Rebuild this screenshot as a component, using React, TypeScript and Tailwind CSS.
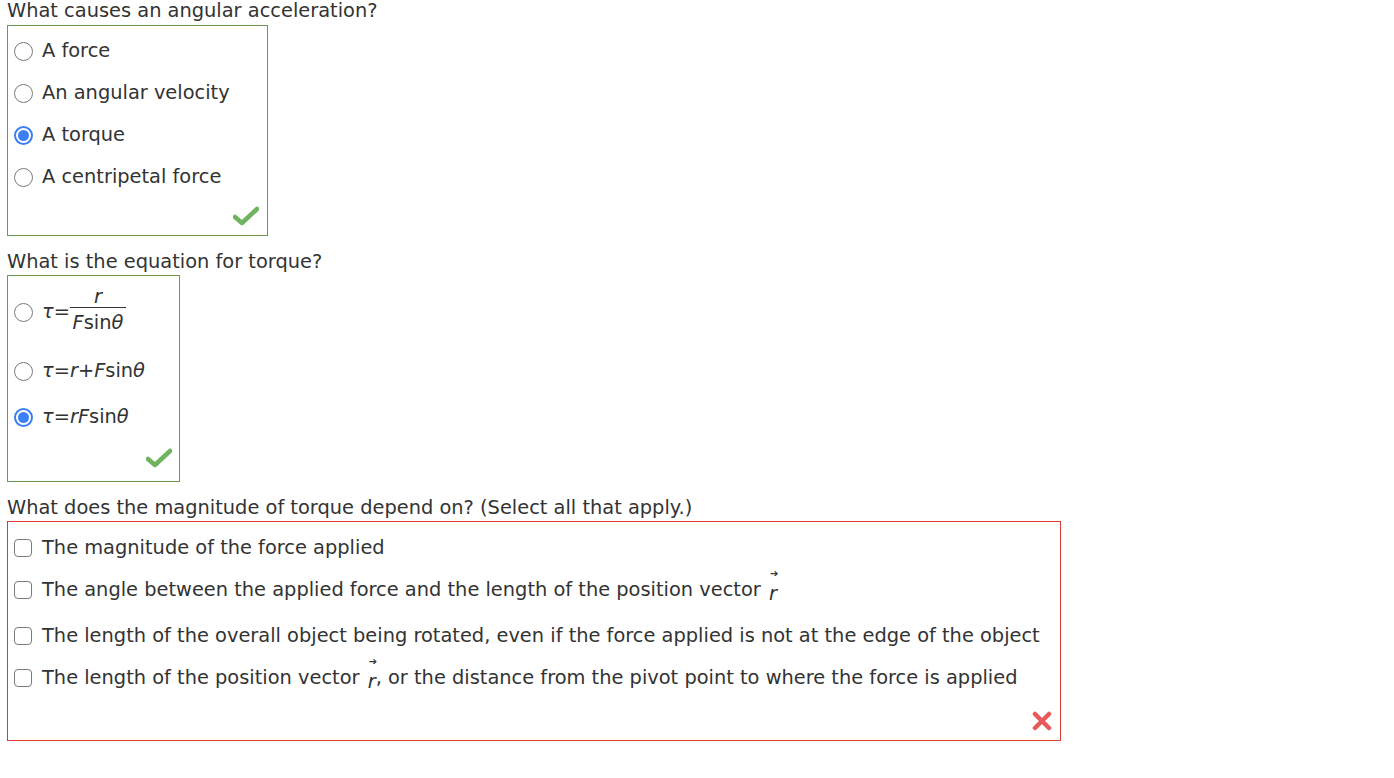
import React from 'react';

const font = { fontFamily: '"DejaVu Sans", Verdana, sans-serif' };

const Radio = ({ checked }: { checked?: boolean }) =>
  checked ? (
    <span className="w-[19px] h-[19px] rounded-full border-2 border-[#3b7ff5] flex items-center justify-center shrink-0">
      <span className="w-[11px] h-[11px] rounded-full bg-[#3b7ff5]" />
    </span>
  ) : (
    <span className="w-[19px] h-[19px] rounded-full border-[1.5px] border-[#7a7a7a] shrink-0" />
  );

const Checkbox = () => (
  <span className="w-[18px] h-[18px] rounded-[4px] border-[1.5px] border-[#7a7a7a] shrink-0" />
);

const Check = () => (
  <svg width="26" height="20" viewBox="0 0 26 20">
    <path d="M2 11 L9 17 L24 3" fill="none" stroke="#70b35e" strokeWidth="4.5" strokeLinecap="round" strokeLinejoin="round" />
  </svg>
);

const Cross = () => (
  <svg width="20" height="20" viewBox="0 0 20 20">
    <path d="M3 3 L17 17 M17 3 L3 17" fill="none" stroke="#e85a5a" strokeWidth="4.5" strokeLinecap="round" />
  </svg>
);

const VecR = () => (
  <span className="relative inline-block ml-[2px] top-[4px]">
    <i>r</i>
    <span className="absolute left-[1px] -top-[10px] text-[10px] leading-none">➔</span>
  </span>
);

export default function App() {
  return (
    <div className="bg-white min-h-screen pl-[7px] text-[#333] text-[19.4px]" style={font}>
      <div className="h-[25px] leading-[22px]">What causes an angular acceleration?</div>
      <div className="w-[261px] h-[211px] border border-[#6e9a50] pl-[6px] pt-[4px] flex flex-col">
        {['A force', 'An angular velocity', 'A torque', 'A centripetal force'].map((t, i) => (
          <div key={t} className="h-[42px] flex items-center gap-[9px]">
            <Radio checked={i === 2} />
            <span>{t}</span>
          </div>
        ))}
        <div className="flex-1 flex items-start justify-end pr-[8px] pt-[8px]">
          <Check />
        </div>
      </div>

      <div className="mt-[14px] h-[25px] leading-[24px]">What is the equation for torque?</div>
      <div className="w-[173px] h-[207px] border border-[#6e9a50] pl-[6px] flex flex-col">
        <div className="h-[72px] flex items-center gap-[9px]">
          <Radio />
          <span className="flex items-center">
            <i>τ</i>=
            <span className="inline-flex flex-col items-center">
              <i className="leading-[20px]">r</i>
              <span className="w-[56px] h-[1px] bg-[#333]" />
              <span className="leading-[30px]"><i>F</i>sin<i>θ</i></span>
            </span>
          </span>
        </div>
        <div className="h-[46px] flex items-center gap-[9px]">
          <Radio />
          <span><i>τ</i>=<i>r</i>+<i>F</i>sin<i>θ</i></span>
        </div>
        <div className="h-[46px] flex items-center gap-[9px]">
          <Radio checked />
          <span><i>τ</i>=<i>rF</i>sin<i>θ</i></span>
        </div>
        <div className="flex-1 flex items-start justify-end pr-[7px] pt-[8px]">
          <Check />
        </div>
      </div>

      <div className="mt-[14px] h-[25px] leading-[24px]">What does the magnitude of torque depend on? (Select all that apply.)</div>
      <div className="w-[1054px] h-[220px] border border-[#d93a32] pl-[6px] pt-[5px] flex flex-col">
        <div className="h-[42px] flex items-center gap-[10px]">
          <Checkbox />
          <span>The magnitude of the force applied</span>
        </div>
        <div className="h-[46px] flex items-center gap-[10px] pb-[4px]">
          <Checkbox />
          <span>The angle between the applied force and the length of the position vector <VecR /></span>
        </div>
        <div className="h-[42px] flex items-center gap-[10px]">
          <Checkbox />
          <span>The length of the overall object being rotated, even if the force applied is not at the edge of the object</span>
        </div>
        <div className="h-[46px] flex items-center gap-[10px] pb-[4px]">
          <Checkbox />
          <span>The length of the position vector <VecR />, or the distance from the pivot point to where the force is applied</span>
        </div>
        <div className="flex-1 flex items-end justify-end pr-[8px] pb-[9px]">
          <Cross />
        </div>
      </div>
    </div>
  );
}
